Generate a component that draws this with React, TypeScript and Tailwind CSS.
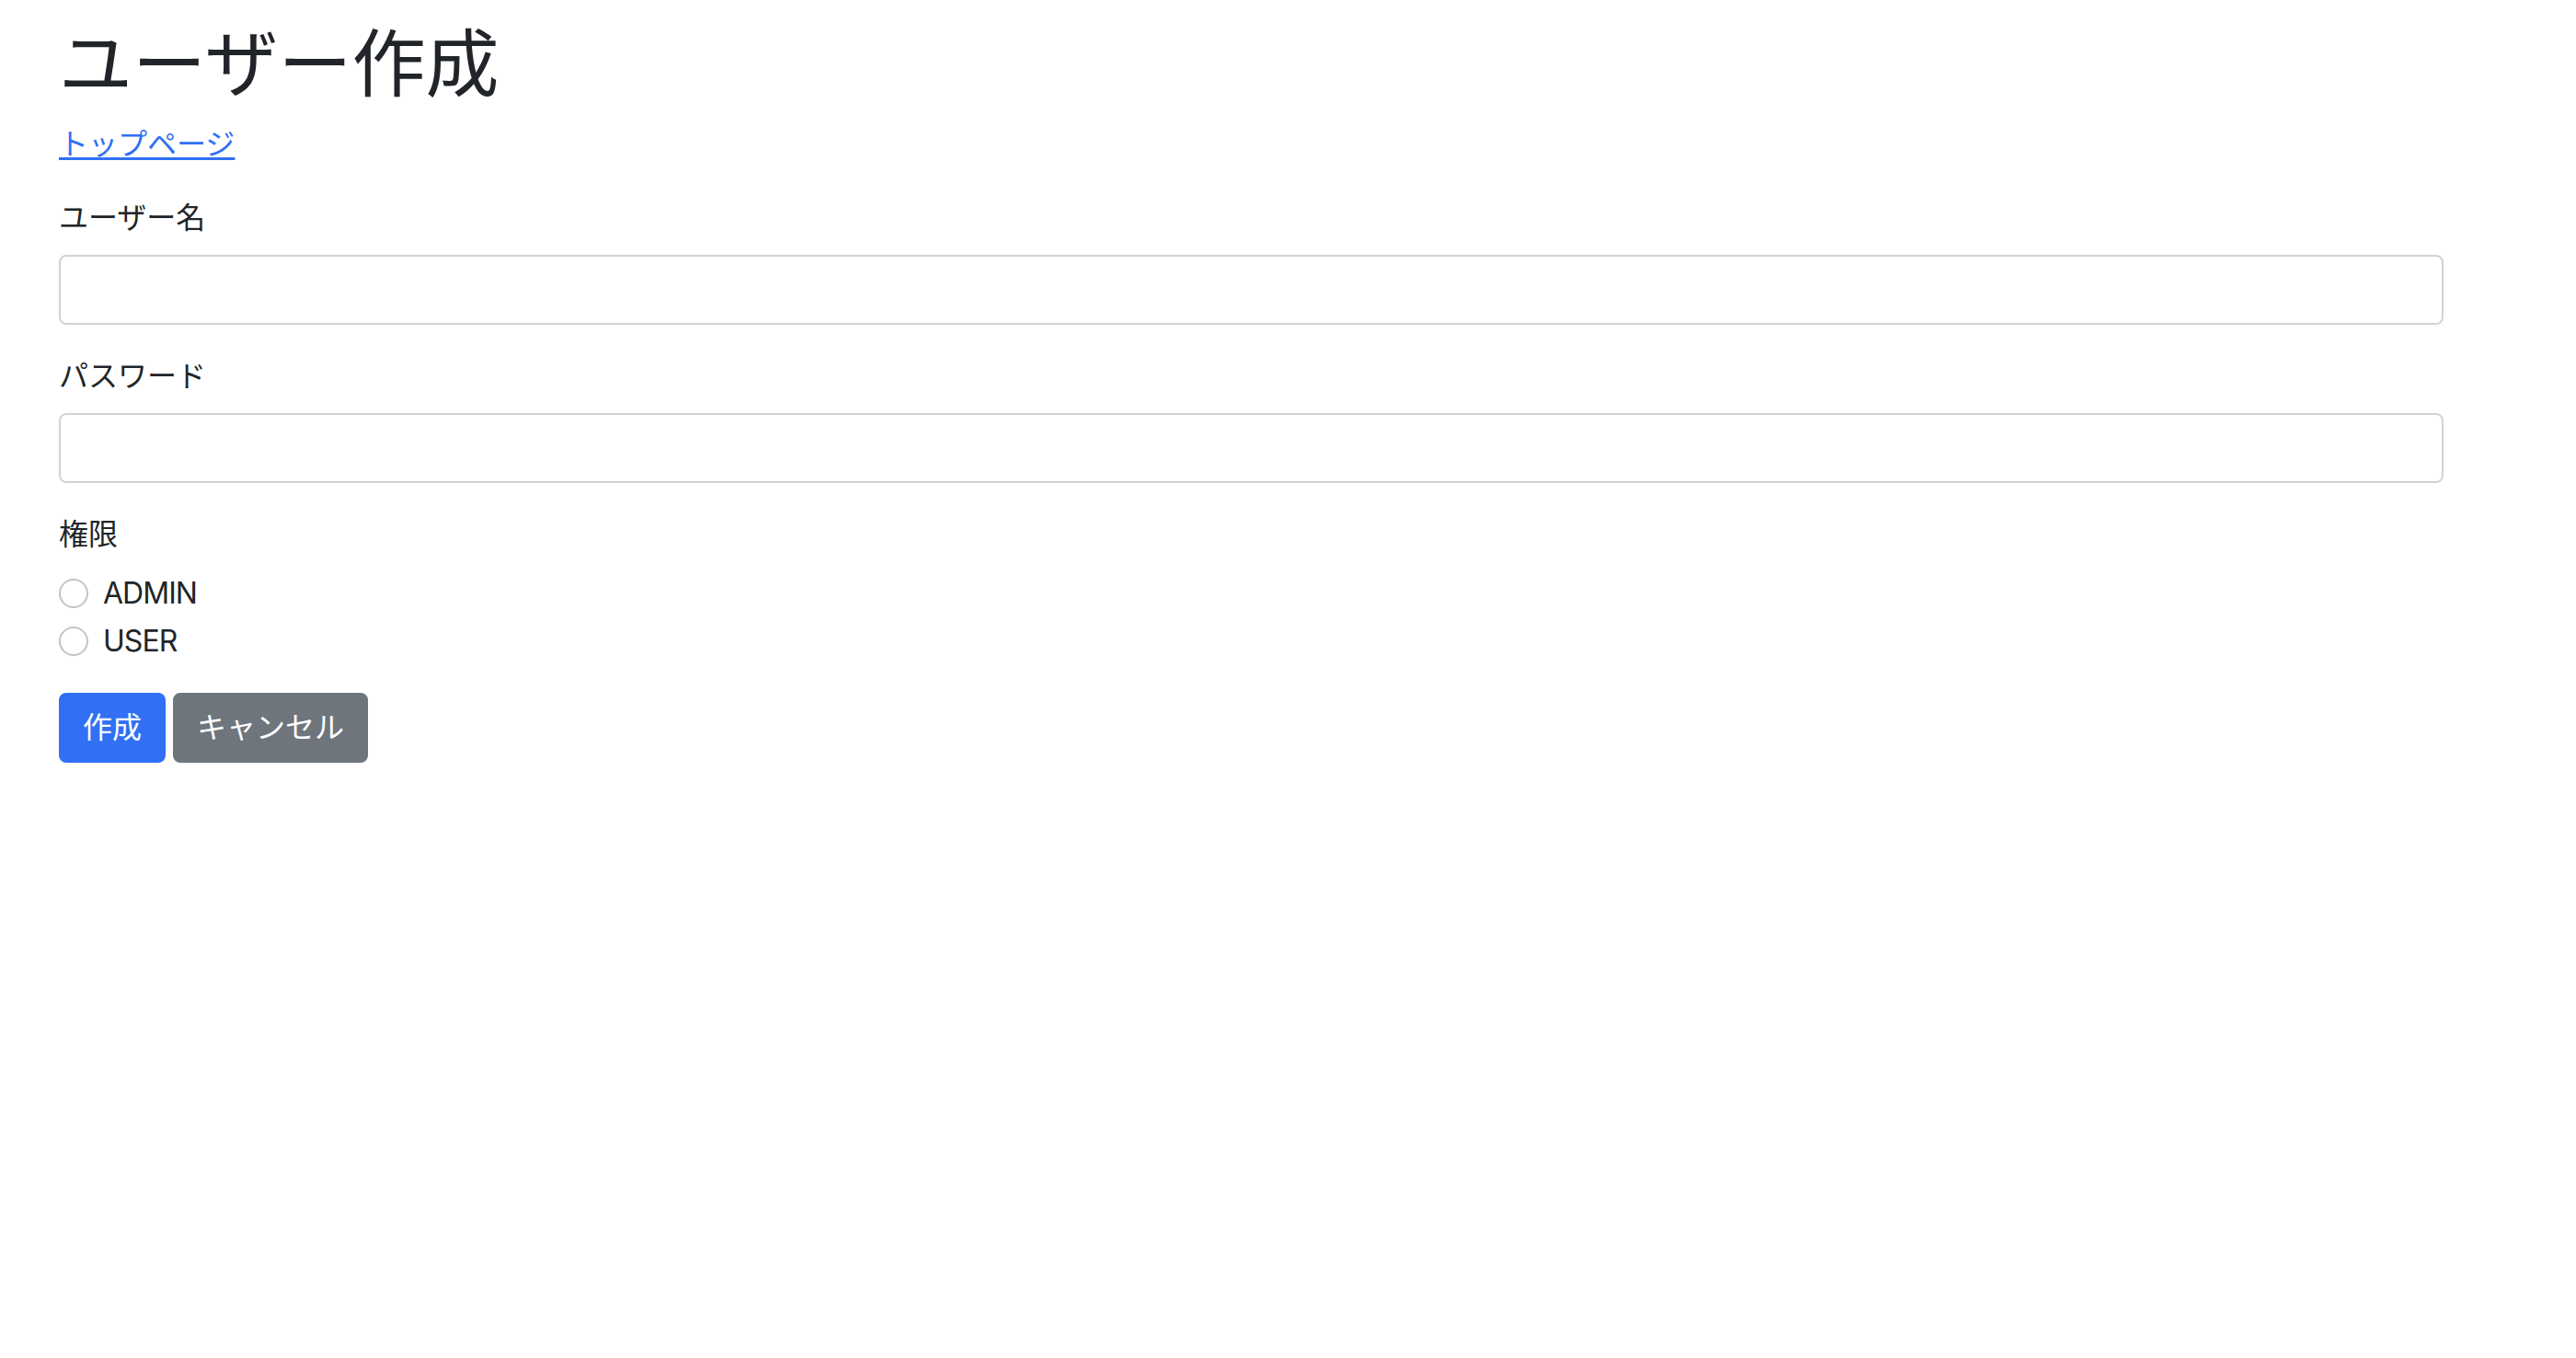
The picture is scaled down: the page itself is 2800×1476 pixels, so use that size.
import { useState } from 'react';

const font = 'font-["Inter","Noto_Sans_CJK_JP",sans-serif]';

const roles = ['ADMIN', 'USER'];

export default function App() {
  const [role, setRole] = useState('');

  return (
    <div className={`min-h-screen bg-white text-[#212529] ${font}`}>
      <div className="px-[64px] pt-[21px]">
        <div className="max-w-[2592px]">
          <h1 className="text-[80px] leading-[96px] font-normal mb-[16px]">ユーザー作成</h1>
          <p className="text-[32px] leading-[48px] mb-[32px]">
            <a href="#" className="text-[#3170f5] underline decoration-[3px] underline-offset-[3px]">
              トップページ
            </a>
          </p>

          <form onSubmit={(e) => e.preventDefault()}>
            {/* ユーザー名 */}
            <div className="mb-[32px]">
              <label className="block text-[32px] leading-[48px] mb-[16px]">ユーザー名</label>
              <input
                type="text"
                className="block w-full h-[76px] px-[24px] py-[12px] text-[32px] leading-[48px] border-2 border-[#ced4da] rounded-[8px] outline-none"
              />
            </div>

            {/* パスワード */}
            <div className="mb-[32px]">
              <label className="block text-[32px] leading-[48px] mb-[16px]">パスワード</label>
              <input
                type="password"
                className="block w-full h-[76px] px-[24px] py-[12px] text-[32px] leading-[48px] border-2 border-[#ced4da] rounded-[8px] outline-none"
              />
            </div>

            {/* 権限 */}
            <div className="mb-[32px]">
              <label className="block text-[32px] leading-[48px] mb-[16px]">権限</label>
              {roles.map((r) => (
                <label key={r} className="flex items-start text-[32px] leading-[48px] mb-[4px] min-h-[48px]">
                  <input
                    type="radio"
                    name="role"
                    checked={role === r}
                    onChange={() => setRole(r)}
                    className="appearance-none w-[32px] h-[32px] mt-[8px] mr-[16px] shrink-0 rounded-full border-2 border-[#c4c4c4] bg-white checked:bg-[#3170f5] checked:border-[#3170f5]"
                  />
                  <span className="tracking-[-0.03em]">{r}</span>
                </label>
              ))}
            </div>

            <div className="flex gap-[8px]">
              <button
                type="submit"
                className="h-[76px] px-[24px] py-[12px] text-[32px] leading-[48px] text-white bg-[#3170f5] border-2 border-[#3170f5] rounded-[8px]"
              >
                作成
              </button>
              <button
                type="button"
                className="h-[76px] px-[24px] py-[12px] text-[32px] leading-[48px] text-white bg-[#6f757d] border-2 border-[#6f757d] rounded-[8px]"
              >
                キャンセル
              </button>
            </div>
          </form>
        </div>
      </div>
    </div>
  );
}
